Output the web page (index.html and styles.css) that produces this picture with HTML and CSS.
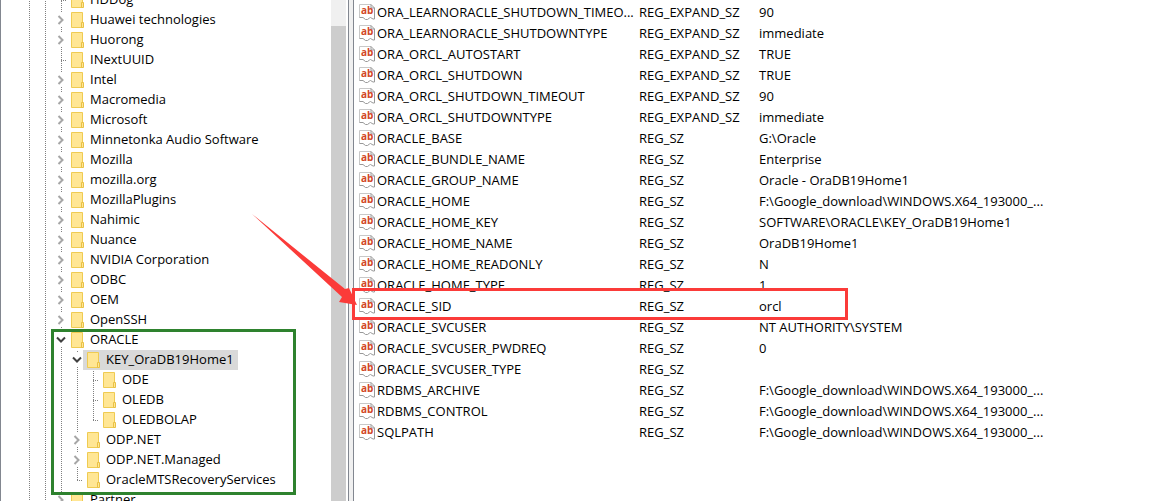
FILE: index.html
```
<!DOCTYPE html>
<html lang="en">
<head>
<meta charset="utf-8">
<title>Registry Editor</title>
<link rel="stylesheet" href="styles.css">
</head>
<body>
<svg class="defs" aria-hidden="true">
  <symbol id="folder" viewBox="0 0 13 16">
    <path d="M.5.5h11v15H.5z" fill="#ffe694" stroke="#efcb52"/>
    <path d="M10.500 10.500h2v5h-2z" fill="#ffe694" stroke="#e9c145"/>
  </symbol>
  <symbol id="closed" viewBox="0 0 8 10">
    <path d="M1.500 1l4 4-4 4" fill="none" stroke="#a6a6a6" stroke-width="2"/>
  </symbol>
  <symbol id="open" viewBox="0 0 10 8">
    <path d="M1 1.500l4 4 4-4" fill="none" stroke="#404040" stroke-width="2"/>
  </symbol>
  <symbol id="string" viewBox="0 0 16 16">
    <path d="M.5 13.500V.5h11.500l3.500 3.500v11h-1.500l-2.500-1.500-1 .5-2 1.500h-2l-2.500-2z" fill="#fff"/>
    <path d="M.5 13.500V.5h11.500" fill="none" stroke="#c8c8c8"/>
    <path d="M12 .5V4h3.500v11h-1.500l-2.500-1.500-1 .5-2 1.500h-2l-2.500-2H.5M12 .5l3.500 3.500" fill="none" stroke="#999"/>
    <text x="2" y="10" class="ab">ab</text>
  </symbol>
</svg>
<main class="window">
  <nav class="tree-pane" aria-label="Keys">
    <ul class="tree" id="tree"></ul>
    <div class="scrollbar"><div class="thumb"></div></div>
  </nav>
  <div class="splitter"></div>
  <section class="list-pane">
    <table class="values">
      <colgroup><col class="c-name"><col class="c-type"><col></colgroup>
      <tbody id="values"></tbody>
    </table>
  </section>
  <div class="mark mark-green"></div>
  <div class="mark mark-red"></div>
  <svg class="arrow" viewBox="0 0 110 96" aria-hidden="true">
    <path d="M2 2L95 77l4-1 8 17-18-3 3-5z" fill="#fb3b39"/>
  </svg>
</main>
<script src="app.js"></script>
</body>
</html>
```
FILE: styles.css
```
* { box-sizing: border-box; }
body {
  margin: 0;
  background: #fff;
  color: #000;
  font: 13px/18px "Open Sans", "Noto Sans", sans-serif;
}
.defs { position: absolute; width: 0; height: 0; }
.ab { font: bold 10px "Open Sans", sans-serif; fill: #d24726; }
.window {
  position: relative;
  display: flex;
  height: 100vh;
  overflow: hidden;
}
.tree-pane {
  display: flex;
  flex: 0 0 349px;
  border-left: 1px solid #828790;
  border-right: 1px solid #828790;
  padding-right: 2px;
}
.tree, .tree ul { list-style: none; margin: 0; }
.tree {
  flex: 1;
  margin-top: -10px;
  padding: 0 0 0 52px;
  --dots: repeating-linear-gradient(#fff 0 1px, #808080 1px 2px);
  background: var(--dots) 28px 0 / 1px 100% no-repeat, var(--dots) 44px 0 / 1px 100% no-repeat;
}
.tree ul { padding: 0 0 0 16px; }
.tree li { background: var(--dots) 8px 0 / 1px 100% no-repeat; }
.tree ul > li:last-child { background-size: 1px 10px; }
.row { display: flex; height: 20px; }
.twist {
  display: flex;
  flex: 0 0 14px;
  align-items: center;
  justify-content: center;
  margin: 3px 0;
  padding: 0 0 0 2px;
  border: 0;
  background: #fff;
}
.twist svg { display: block; flex: none; }
.closed { width: 8px; height: 10px; }
.open { width: 10px; height: 8px; }
.leaf {
  flex: 0 0 14px;
  background: repeating-linear-gradient(90deg, #808080 0 1px, #fff 1px 2px) 8px 10px / 6px 1px no-repeat;
}
.label { display: flex; align-items: center; gap: 6px; padding: 0 4px; white-space: nowrap; }
.label span { padding-bottom: 2px; }
.selected { background: #d9d9d9; }
.folder { width: 13px; height: 16px; }
.scrollbar { flex: 0 0 15px; padding-top: 26px; background: #f0f0f0; }
.thumb { height: 100%; background: #cdcdcd; }
.splitter { flex: 0 0 4px; background: #f0f0f0; }
.list-pane { flex: 1; min-width: 0; border-left: 1px solid #828790; padding-top: 2px; }
.values { width: 100%; table-layout: fixed; border-collapse: collapse; }
.c-name { width: 285px; }
.c-type { width: 120px; }
.values td { height: 21px; padding: 0 0 1px; white-space: nowrap; }
.name { display: flex; align-items: center; gap: 2px; padding-left: 5px; }
.string { width: 16px; height: 16px; flex: none; }
.mark { position: absolute; }
.mark-green { left: 51px; top: 329px; width: 245px; height: 166px; border: 3px solid #2e822e; }
.mark-red { left: 352px; top: 288px; width: 496px; height: 32px; border: 3px solid #fb3b39; }
.arrow { position: absolute; left: 250px; top: 212px; width: 110px; height: 96px; }
```
FILE: app.js
```
const keys = [
  ["HDDog"], ["Huawei technologies", []], ["Huorong", []], ["INextUUID"], ["Intel", []],
  ["Macromedia", []], ["Microsoft", []], ["Minnetonka Audio Software", []], ["Mozilla", []],
  ["mozilla.org", []], ["MozillaPlugins", []], ["Nahimic", []], ["Nuance", []],
  ["NVIDIA Corporation", []], ["ODBC", []], ["OEM", []], ["OpenSSH", []],
  ["ORACLE", [
    ["KEY_OraDB19Home1", [["ODE"], ["OLEDB"], ["OLEDBOLAP"]]],
    ["ODP.NET", []], ["ODP.NET.Managed", []], ["OracleMTSRecoveryServices"]
  ]],
  ["Partner", []]
];
const values = [
  ["ORA_LEARNORACLE_SHUTDOWN_TIMEO...", "REG_EXPAND_SZ", "90"],
  ["ORA_LEARNORACLE_SHUTDOWNTYPE", "REG_EXPAND_SZ", "immediate"],
  ["ORA_ORCL_AUTOSTART", "REG_EXPAND_SZ", "TRUE"],
  ["ORA_ORCL_SHUTDOWN", "REG_EXPAND_SZ", "TRUE"],
  ["ORA_ORCL_SHUTDOWN_TIMEOUT", "REG_EXPAND_SZ", "90"],
  ["ORA_ORCL_SHUTDOWNTYPE", "REG_EXPAND_SZ", "immediate"],
  ["ORACLE_BASE", "REG_SZ", "G:\\Oracle"],
  ["ORACLE_BUNDLE_NAME", "REG_SZ", "Enterprise"],
  ["ORACLE_GROUP_NAME", "REG_SZ", "Oracle - OraDB19Home1"],
  ["ORACLE_HOME", "REG_SZ", "F:\\Google_download\\WINDOWS.X64_193000_..."],
  ["ORACLE_HOME_KEY", "REG_SZ", "SOFTWARE\\ORACLE\\KEY_OraDB19Home1"],
  ["ORACLE_HOME_NAME", "REG_SZ", "OraDB19Home1"],
  ["ORACLE_HOME_READONLY", "REG_SZ", "N"],
  ["ORACLE_HOME_TYPE", "REG_SZ", "1"],
  ["ORACLE_SID", "REG_SZ", "orcl"],
  ["ORACLE_SVCUSER", "REG_SZ", "NT AUTHORITY\\SYSTEM"],
  ["ORACLE_SVCUSER_PWDREQ", "REG_SZ", "0"],
  ["ORACLE_SVCUSER_TYPE", "REG_SZ", ""],
  ["RDBMS_ARCHIVE", "REG_SZ", "F:\\Google_download\\WINDOWS.X64_193000_..."],
  ["RDBMS_CONTROL", "REG_SZ", "F:\\Google_download\\WINDOWS.X64_193000_..."],
  ["SQLPATH", "REG_SZ", "F:\\Google_download\\WINDOWS.X64_193000_..."]
];
const icon = id => `<svg class="${id}" aria-hidden="true"><use href="#${id}"/></svg>`;
function item([name, children]) {
  const state = children && children.length ? "open" : "closed";
  const twist = children
    ? `<button class="twist" aria-label="${name}" aria-expanded="${state === "open"}">${icon(state)}</button>`
    : `<span class="leaf"></span>`;
  const selected = name === "KEY_OraDB19Home1" ? " selected" : "";
  const nested = state === "open" ? `<ul>${children.map(item).join("")}</ul>` : "";
  return `<li><div class="row">${twist}<span class="label${selected}">${icon("folder")}<span>${name}</span></span></div>${nested}</li>`;
}
document.getElementById("tree").innerHTML = keys.map(item).join("");
document.getElementById("values").innerHTML = values.map(([name, type, data]) =>
  `<tr><td><div class="name">${icon("string")}<span>${name}</span></div></td><td>${type}</td><td>${data}</td></tr>`).join("");
```
